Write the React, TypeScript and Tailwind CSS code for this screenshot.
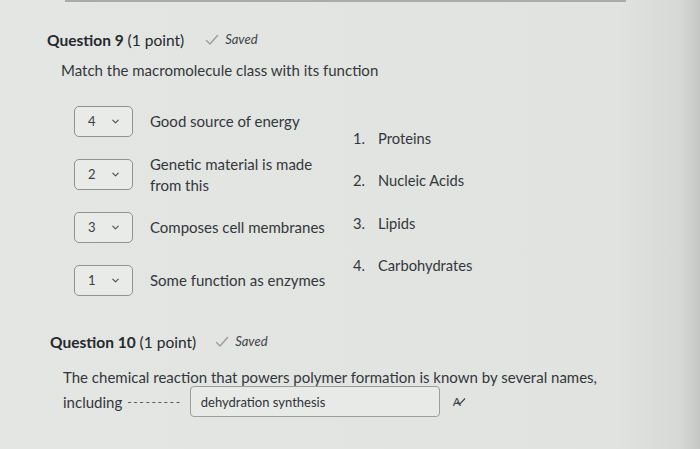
import React from "react";
import { ChevronDown } from "lucide-react";

const font = { fontFamily: "Lato, 'Noto Sans', sans-serif" };

const matches = [
  { value: "4", label: "Good source of energy" },
  { value: "2", label: "Genetic material is made from this" },
  { value: "3", label: "Composes cell membranes" },
  { value: "1", label: "Some function as enzymes" },
];

const options = ["Proteins", "Nucleic Acids", "Lipids", "Carbohydrates"];

function SavedTag() {
  return (
    <span className="flex items-center gap-[6px] text-[13px] italic text-[#3f4347]">
      <svg width="14" height="12" viewBox="0 0 14 12" fill="none">
        <path d="M1.5 6.5 L5 10 L12.5 1.5" stroke="#9a9ea2" strokeWidth="1.4" strokeLinecap="round" strokeLinejoin="round" />
      </svg>
      Saved
    </span>
  );
}

function SelectBox({ value }: { value: string }) {
  return (
    <div className="flex h-[31px] w-[59px] shrink-0 items-center justify-between rounded-[5px] border border-[#8d9297] bg-[#e9ebe8] pl-[13px] pr-[11px] text-[13px] text-[#3b3f43]">
      <span>{value}</span>
      <ChevronDown size={11} strokeWidth={2.4} className="text-[#4a4e52]" />
    </div>
  );
}

export default function App() {
  return (
    <div
      style={font}
      className="h-[449px] w-[700px] overflow-hidden bg-[linear-gradient(to_right,#e4e6e3_0%,#e1e3e0_88%,#d6d9d6_97%,#c4c7c4_100%)] text-[#33373b]"
    >
      <div className="ml-[65px] h-[2px] w-[561px] bg-[#a9acaa]" />

      {/* Question 9 */}
      <div className="ml-[47px] mt-[28px] flex items-center gap-[21px]">
        <h2 className="text-[15.5px] leading-[20px] text-[#25292d]">
          <span className="font-bold">Question 9</span> (1 point)
        </h2>
        <SavedTag />
      </div>
      <p className="ml-[61px] mt-[10px] text-[15px] leading-[20px]">
        Match the macromolecule class with its function
      </p>

      <div className="ml-[74px] mt-[15px] flex">
        <div className="flex w-[279px] flex-col">
          {matches.map((m) => (
            <div key={m.value + m.label} className="flex h-[53px] items-center gap-[17px]">
              <SelectBox value={m.value} />
              <span className="w-[180px] text-[15px] leading-[21px]">{m.label}</span>
            </div>
          ))}
        </div>
        <ol className="mt-[22px] flex flex-col">
          {options.map((o, i) => (
            <li key={o} className="flex h-[42.3px] items-center text-[14.7px]">
              <span className="w-[25px]">{i + 1}.</span>
              <span>{o}</span>
            </li>
          ))}
        </ol>
      </div>

      {/* Question 10 */}
      <div className="ml-[50px] mt-[25px] flex items-center gap-[19px]">
        <h2 className="text-[15.5px] leading-[20px] text-[#25292d]">
          <span className="font-bold">Question 10</span> (1 point)
        </h2>
        <SavedTag />
      </div>
      <div className="ml-[63px] mt-[13px] text-[15px] leading-[24px]">
        <p>The chemical reaction that powers polymer formation is known by several names,</p>
        <div className="-mt-[3px] flex items-center">
          <span>including</span>
          <span className="ml-[5px] text-[12px] tracking-[1.6px] text-[#4a4e52]">---------</span>
          <div className="ml-[8px] flex h-[31px] w-[250px] items-center rounded-[4px] border border-[#9a9ea1] bg-[#e8eae7] px-[10px] text-[13px] text-[#2f3337]">
            dehydration synthesis
          </div>
          <span className="ml-[13px] flex items-center text-[12px] text-[#3f4347]">
            <span className="relative">
              A
              <svg className="absolute left-[3px] top-[8px]" width="10" height="8" viewBox="0 0 10 8" fill="none">
                <path d="M1 4 L3.5 6.5 L9 0.5" stroke="#3f4347" strokeWidth="1.2" />
              </svg>
            </span>
          </span>
        </div>
      </div>
    </div>
  );
}
